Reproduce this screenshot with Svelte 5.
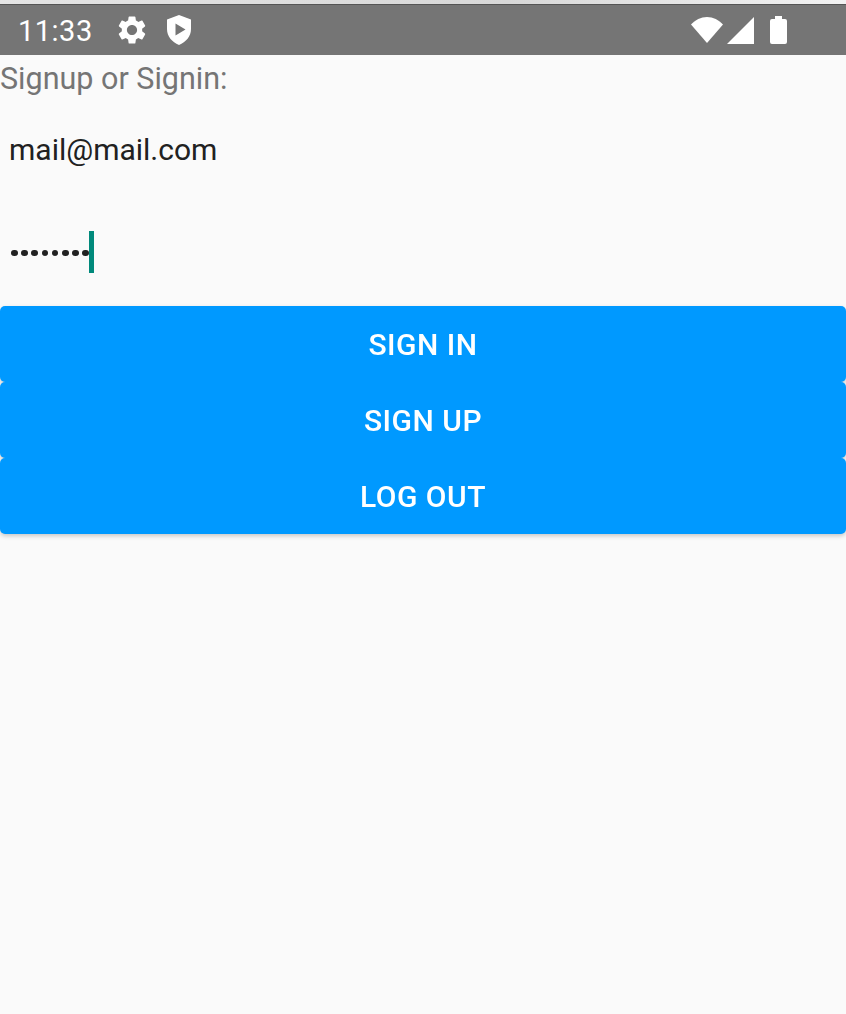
<script>
	let dots = 8;
</script>

<div class="screen">
	<div class="topline"></div>
	<div class="statusbar">
		<div class="left">
			<span class="time">11:33</span>
			<svg class="gear" viewBox="0 0 24 24" width="34" height="34">
				<path fill="#fff" d="M19.14 12.94c.04-.3.06-.61.06-.94 0-.32-.02-.64-.07-.94l2.03-1.58c.18-.14.23-.41.12-.61l-1.92-3.32c-.12-.22-.37-.29-.59-.22l-2.39.96c-.5-.38-1.03-.7-1.62-.94l-.36-2.54c-.04-.24-.24-.41-.48-.41h-3.84c-.24 0-.43.17-.47.41l-.36 2.54c-.59.24-1.13.57-1.62.94l-2.39-.96c-.22-.08-.47 0-.59.22L2.74 8.87c-.12.21-.08.47.12.61l2.03 1.58c-.05.3-.09.63-.09.94s.02.64.07.94l-2.03 1.58c-.18.14-.23.41-.12.61l1.92 3.32c.12.22.37.29.59.22l2.39-.96c.5.38 1.03.7 1.62.94l.36 2.54c.05.24.24.41.48.41h3.84c.24 0 .44-.17.47-.41l.36-2.54c.59-.24 1.13-.56 1.62-.94l2.39.96c.22.08.47 0 .59-.22l1.92-3.32c.12-.22.07-.47-.12-.61l-2.01-1.58zM12 15.6c-1.98 0-3.6-1.62-3.6-3.6s1.62-3.6 3.6-3.6 3.6 1.62 3.6 3.6-1.62 3.6-3.6 3.6z" />
			</svg>
			<svg class="shield" viewBox="0 0 26 30" width="26" height="30">
				<path fill="#fff" fill-rule="evenodd" d="M13 0 L25 4.5 V14 C25 21.5 20 27 13 30 C6 27 1 21.5 1 14 V4.5 Z M9.5 8.5 V20.5 L19.5 14.5 Z" />
			</svg>
		</div>
		<div class="right">
			<svg viewBox="0 0 32 26" width="32" height="26">
				<path fill="#fff" d="M0 7.5 C4 3 10 0 16 0 C22 0 28 3 32 7.5 L16 26 Z" />
			</svg>
			<svg viewBox="0 0 27 27" width="27" height="27">
				<path fill="#fff" d="M27 0 V27 H0 Z" />
			</svg>
			<svg viewBox="0 0 17 28" width="17" height="28">
				<path fill="#fff" d="M5 0 H12 V3 H15 Q17 3 17 5 V26 Q17 28 15 28 H2 Q0 28 0 26 V5 Q0 3 2 3 H5 Z" />
			</svg>
		</div>
	</div>

	<div class="label">Signup or Signin:</div>
	<div class="field email">mail@mail.com</div>
	<div class="field password">
		<span class="dots">
			{#each Array(dots) as _}
				<i></i>
			{/each}
		</span>
		<span class="caret"></span>
	</div>

	<div class="buttons">
		<button>SIGN IN</button>
		<button>SIGN UP</button>
		<button>LOG OUT</button>
	</div>
</div>

<style>
	:global(body) {
		margin: 0;
		background: #fafafa;
	}

	.screen {
		height: 1014px;
		overflow: hidden;
		background: #fafafa;
		font-family: Roboto, sans-serif;
	}

	.topline {
		height: 4px;
		background: linear-gradient(90deg, #e4e4e4, #d8d8d8 60%, #f2f2f2);
		border-bottom: 1px solid #555;
	}

	.statusbar {
		height: 50px;
		background: #757575;
		display: flex;
		align-items: center;
		justify-content: space-between;
		padding: 0 59px 0 18px;
		color: #fff;
	}

	.left,
	.right {
		display: flex;
		align-items: center;
	}

	.time {
		font-size: 29px;
		letter-spacing: 0.5px;
		width: 97px;
		padding-top: 2px;
	}

	.shield {
		margin-left: 17px;
	}

	.right {
		gap: 4px;
		padding-left: 1px;
	}

	.right svg:last-child {
		margin-left: 12px;
	}

	.label {
		font-size: 30.5px;
		line-height: 47px;
		color: #757575;
	}

	.field {
		padding-left: 9px;
		font-size: 30px;
		color: #212121;
		display: flex;
		align-items: center;
	}

	.email {
		height: 95px;
	}

	.password {
		height: 64px;
		margin-top: 23px;
	}

	.dots {
		display: flex;
		gap: 3.6px;
		margin-left: 2px;
		padding-top: 2px;
	}

	.dots i {
		width: 6.6px;
		height: 6.6px;
		border-radius: 50%;
		background: #212121;
	}

	.caret {
		width: 5px;
		height: 42px;
		background: #00897b;
	}

	.buttons {
		margin-top: 22px;
		display: flex;
		flex-direction: column;
		filter: drop-shadow(0 2px 2px rgba(0, 0, 0, 0.2));
	}

	button {
		height: 76px;
		border: 0;
		border-radius: 5px;
		background: #0099ff;
		color: #fff;
		font-family: Roboto, sans-serif;
		font-size: 30px;
		font-weight: 500;
		letter-spacing: 0.5px;
		padding: 0;
	}
</style>
